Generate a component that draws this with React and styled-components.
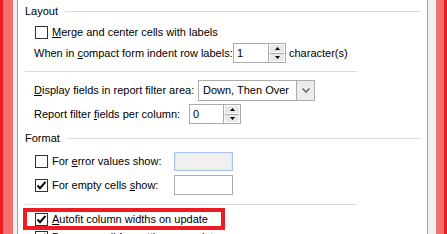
import styled, { createGlobalStyle } from "styled-components";

// CSS
const GlobalStyle = createGlobalStyle`
  html, body {
    margin: 0;
    padding: 0;
    background: #fff;
  }
  body {
    font-family: "Liberation Sans", Arial, sans-serif;
    font-size: 11px;
    color: #000;
  }
`;

const Screen = styled.div`
  display: flex;
  width: 447px;
  height: 234px;
  overflow: hidden;
`;

const RedEdge = styled.div`
  flex: none;
  width: ${(p) => p.$w}px;
  background: #f07070;
  ${(p) => (p.$side === "left" ? "border-left" : "border-right")}: 3px solid #ed1c24;
`;

const Gutter = styled.div`
  flex: none;
  width: ${(p) => p.$w}px;
  background: #f0f0f0;
`;

const Panel = styled.div`
  flex: 1;
  display: flex;
  flex-direction: column;
  background: #fff;
  border-left: 1px solid #a0a0a0;
  border-right: 1px solid #a0a0a0;
  padding: 0 6px 0 7px;
`;

const GroupHeader = styled.div`
  display: flex;
  align-items: center;
  gap: 7px;
  height: 22px;
  flex: none;
  margin-top: ${(p) => p.$top || 0}px;

  &::after {
    content: "";
    flex: 1;
    height: 1px;
    background: #dcdcdc;
  }
`;

const Separator = styled.div`
  flex: none;
  width: 332px;
  height: 1px;
  background: #dcdcdc;
  margin: ${(p) => p.$top}px 0 ${(p) => p.$bottom}px;
`;

const Row = styled.div`
  display: flex;
  align-items: center;
  flex: none;
  height: ${(p) => p.$h || 20}px;
  margin-top: ${(p) => p.$top || 0}px;
  padding-left: ${(p) => (p.$check ? 10 : 9)}px;
  white-space: nowrap;
`;

const Highlight = styled(Row)`
  align-self: flex-start;
  width: 198px;
  box-sizing: border-box;
  outline: 4px solid #ed1c24;
  outline-offset: -2px;
`;

const Label = styled.span`
  display: inline-block;
  flex: none;
  width: ${(p) => (p.$w ? `${p.$w}px` : "auto")};
`;

const Key = styled.span`
  text-decoration: underline;
  text-underline-offset: 1px;
`;

const Box = styled.span`
  flex: none;
  width: 13px;
  height: 13px;
  box-sizing: border-box;
  border: 1px solid #333;
  background: #fff;
  margin-right: 4px;
  display: flex;
  align-items: center;
  justify-content: center;
`;

const TextBox = styled.div`
  flex: none;
  box-sizing: border-box;
  width: ${(p) => p.$w}px;
  height: ${(p) => p.$h || 20}px;
  border: 1px solid ${(p) => (p.$disabled ? "#a9c6e8" : "#acacac")};
  background: ${(p) => (p.$disabled ? "#f0f0f0" : "#fff")};
  box-shadow: ${(p) => (p.$disabled ? "inset 0 0 0 1px #dce8f5" : "none")};
`;

const Spinner = styled.div`
  flex: none;
  display: flex;
  box-sizing: border-box;
  width: ${(p) => p.$w}px;
  height: 20px;
  border: 1px solid #acacac;
  background: #fff;
  margin-right: 3px;
`;

const SpinValue = styled.span`
  flex: 1;
  padding-left: 3px;
  line-height: 18px;
`;

const SpinButtons = styled.div`
  flex: none;
  width: 16px;
  display: flex;
  flex-direction: column;
  border-left: 1px solid #acacac;
`;

const SpinButton = styled.div`
  flex: 1;
  display: flex;
  align-items: center;
  justify-content: center;
  background: #e8e8e8;
  border: 1px solid #fff;
  & + & {
    border-top: 1px solid #acacac;
  }
`;

const Select = styled.div`
  flex: none;
  display: flex;
  box-sizing: border-box;
  width: 117px;
  height: 21px;
  border: 1px solid #acacac;
  background: #fff;
`;

const SelectValue = styled.span`
  flex: 1;
  padding-left: 4px;
  line-height: 19px;
`;

const SelectButton = styled.div`
  flex: none;
  width: 17px;
  display: flex;
  align-items: center;
  justify-content: center;
  background: #ececec;
  border-left: 1px solid #acacac;
`;

const Check = () => (
  <svg width="11" height="11" viewBox="0 0 11 11">
    <path d="M1.5 5.5 L4 8.2 L9.5 1.8" fill="none" stroke="#000" strokeWidth="1.9" />
  </svg>
);

const Checkbox = ({ checked }) => <Box>{checked && <Check />}</Box>;

const Arrow = ({ up }) => (
  <svg width="5" height="3" viewBox="0 0 5 3">
    <path d={up ? "M0 3 L2.5 0 L5 3 Z" : "M0 0 L2.5 3 L5 0 Z"} fill="#000" />
  </svg>
);

const Spin = ({ value, w }) => (
  <Spinner $w={w}>
    <SpinValue>{value}</SpinValue>
    <SpinButtons>
      <SpinButton>
        <Arrow up />
      </SpinButton>
      <SpinButton>
        <Arrow />
      </SpinButton>
    </SpinButtons>
  </Spinner>
);

export default function App() {
  return (
    <>
      <GlobalStyle />
      <Screen>
        <RedEdge $side="left" $w={10} />
        <Gutter $w={4} />
        <Panel>
          <GroupHeader>Layout</GroupHeader>
          <Row $check>
            <Checkbox />
            <Label>
              <Key>M</Key>erge and center cells with labels
            </Label>
          </Row>
          <Row $h={21}>
            <Label $w={199}>
              When in <Key>c</Key>ompact form indent row labels:
            </Label>
            <Spin value="1" w={53} />
            <Label>character(s)</Label>
          </Row>
          <Separator $top={8} $bottom={7} />
          <Row $h={22}>
            <Label $w={164}>
              <Key>D</Key>isplay fields in report filter area:
            </Label>
            <Select>
              <SelectValue>Down, Then Over</SelectValue>
              <SelectButton>
                <svg width="8" height="5" viewBox="0 0 8 5">
                  <path d="M0.5 0.5 L4 4 L7.5 0.5" fill="none" stroke="#5a5a5a" strokeWidth="1.3" />
                </svg>
              </SelectButton>
            </Select>
          </Row>
          <Row $top={3}>
            <Label $w={155}>
              Report filter <Key>f</Key>ields per column:
            </Label>
            <Spin value="0" w={52} />
          </Row>
          <GroupHeader $top={3}>Format</GroupHeader>
          <Row $check $top={2}>
            <Checkbox />
            <Label $w={122}>
              For <Key>e</Key>rror values show:
            </Label>
            <TextBox $w={59} $h={19} $disabled />
          </Row>
          <Row $check $top={4}>
            <Checkbox checked />
            <Label $w={122}>
              For empty cells <Key>s</Key>how:
            </Label>
            <TextBox $w={59} />
          </Row>
          <Separator $top={9} $bottom={5} />
          <Highlight $check $h={18}>
            <Checkbox checked />
            <Label>
              <Key>A</Key>utofit column widths on update
            </Label>
          </Highlight>
          <Row $check $h={18}>
            <Checkbox checked />
            <Label>
              <Key>P</Key>reserve cell formatting on update
            </Label>
          </Row>
        </Panel>
        <Gutter $w={8} />
        <RedEdge $side="right" $w={8} />
      </Screen>
    </>
  );
}
